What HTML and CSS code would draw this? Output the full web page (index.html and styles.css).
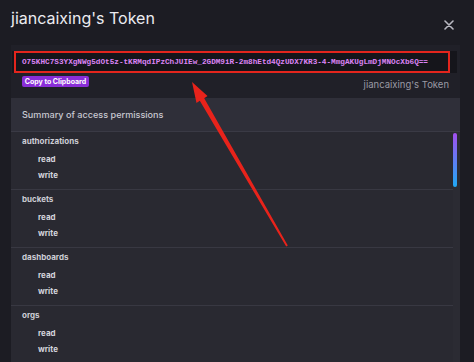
FILE: index.html
```html
<!DOCTYPE html>
<html>
<head>
  <meta charset="utf-8">
  <title>jiancaixing's Token</title>
  <link rel="stylesheet" href="styles.css">
</head>
<body>
  <div class="modal">
    <div class="header">
      <h1 class="title">jiancaixing's Token</h1>
      <span class="closeBtn">
        <svg width="10" height="10" viewBox="0 0 10 10"><path d="M1 1 L9 9 M9 1 L1 9" stroke="#b9b9c2" stroke-width="1.6" stroke-linecap="round"/></svg>
      </span>
    </div>

    <div class="body">
      <div class="form">
        <div class="tokenBar">
          <div class="tokenBox">O75KHC7S3YXgNWg5dOt5z-tKRMqdIPzChJUIEw_2GDM9iR-2m8hEtd4QzUDX7KR3-4-MmgAKUgLmDjMNOcXb6Q==</div>
        </div>
        <div class="copyRow">
          <span class="copyBtn">Copy to Clipboard</span>
          <span class="tokenName">jiancaixing's Token</span>
        </div>
      </div>

      <div class="panel">
        <div class="panelHeader">Summary of access permissions</div>
        <div class="panelBody">
          <div class="perms">
            <div class="perm">
              <div class="permName">authorizations</div>
              <div class="action">read</div>
              <div class="action">write</div>
            </div>
            <div class="perm">
              <div class="permName">buckets</div>
              <div class="action">read</div>
              <div class="action">write</div>
            </div>
            <div class="perm">
              <div class="permName">dashboards</div>
              <div class="action">read</div>
              <div class="action">write</div>
            </div>
            <div class="perm">
              <div class="permName">orgs</div>
              <div class="action">read</div>
              <div class="action">write</div>
            </div>
          </div>
          <div class="scrollTrack"><div class="scrollThumb"></div></div>
        </div>
      </div>
    </div>
  </div>

  <svg class="arrow" width="474" height="362" viewBox="0 0 474 362">
    <polygon points="192,82 207.5,96 204.2,98.2 287.8,245.5 286.2,246.5 199.8,100.7 196.5,103" fill="#e8231b"/>
  </svg>
</body>
</html>
```

FILE: styles.css
```css
* {
  box-sizing: border-box;
}

body {
  margin: 0;
  background: #1c1c23;
  font-family: Inter, "Noto Sans", sans-serif;
  color: #e4e4ea;
  overflow: hidden;
}

.modal {
  width: 474px;
  height: 362px;
}

.header {
  display: flex;
  justify-content: space-between;
  align-items: flex-start;
  height: 45px;
  padding: 0 20px 0 11px;
}

.title {
  margin: 8px 0 0 0;
  font-size: 16px;
  font-weight: 400;
  line-height: 20px;
  color: #ececf1;
}

.closeBtn {
  display: flex;
  margin-top: 20px;
}

.body {
  margin: 0 14px 0 11px;
}

.form {
  background: #202028;
  padding: 6px 1px 0 1px;
  height: 53px;
}

.tokenBar {
  background: #15151b;
  height: 22px;
  margin-right: 2px;
}

.tokenBox {
  width: 436px;
  height: 22px;
  margin-left: 2px;
  border: 2px solid #e3251d;
  padding-left: 6px;
  display: flex;
  align-items: center;
  font-family: "Liberation Mono", monospace;
  font-size: 7.7px;
  font-weight: 700;
  color: #dc84f4;
  white-space: nowrap;
}

.copyRow {
  display: flex;
  justify-content: space-between;
  align-items: flex-start;
  padding: 3px 10px 0 10px;
}

.copyBtn {
  background: #8a2ed8;
  color: #ffffff;
  font-size: 7px;
  font-weight: 700;
  line-height: 11px;
  height: 11px;
  width: 67px;
  text-align: center;
  border-radius: 2px;
}

.tokenName {
  margin-top: 3px;
  font-size: 9.5px;
  color: #9a9aa4;
}

.panel {
  background: #292931;
}

.panelHeader {
  height: 34px;
  background: #2f2f39;
  border-bottom: 1px solid #3a3a45;
  padding-left: 11px;
  display: flex;
  align-items: center;
  font-size: 9.1px;
  font-weight: 500;
  color: #c9c9d2;
}

.panelBody {
  display: flex;
}

.perms {
  flex: 1;
}

.perm {
  height: 58px;
  border-bottom: 1px solid #383842;
  padding-left: 11px;
}

.permName {
  height: 19px;
  line-height: 19px;
  font-size: 8px;
  font-weight: 700;
  color: #cdcdd5;
}

.action {
  height: 16px;
  line-height: 16px;
  padding-left: 16px;
  font-size: 8px;
  font-weight: 700;
  color: #d4d4dc;
}

.scrollTrack {
  width: 7px;
  background: #2b2b33;
  padding-top: 1px;
}

.scrollThumb {
  width: 4px;
  height: 54px;
  border-radius: 2px;
  background: linear-gradient(#a34ff0, #1fa9f5);
}

.arrow {
  position: absolute;
  left: 0;
  top: 0;
  pointer-events: none;
}
```
